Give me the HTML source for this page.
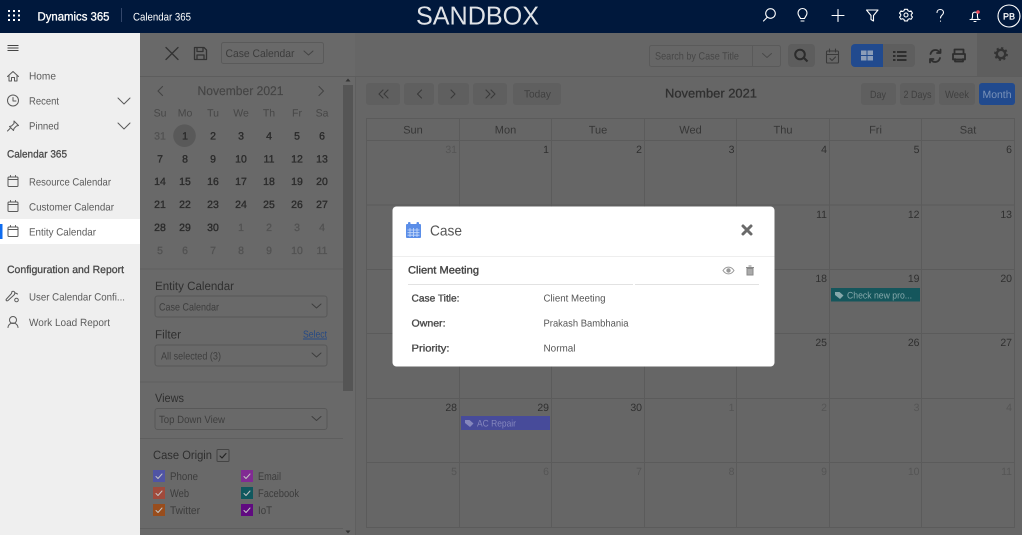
<!DOCTYPE html>
<html><head><meta charset="utf-8"><style>
html,body{margin:0;padding:0;width:1022px;height:535px;overflow:hidden;background:#666}
svg{display:block;font-family:"Liberation Sans",sans-serif}
.c text{text-anchor:middle}
.r text{text-anchor:end}
.ic{fill:none;stroke-linecap:round;stroke-linejoin:round}
</style></head><body>
<svg width="1022" height="535" viewBox="0 0 1022 535" xmlns="http://www.w3.org/2000/svg" text-rendering="geometricPrecision">
<rect width="1022" height="535" fill="#666"/>
<!-- left panel -->
<rect x="140" y="33" width="215" height="502" fill="#696969"/>
<rect x="977" y="33" width="45" height="43" fill="#5e5e5e"/>
<rect x="140" y="76" width="882" height="1" fill="#5d5d5d"/>
<rect x="355" y="77" width="1" height="458" fill="#5f5f5f"/>
<!-- header -->
<rect width="1022" height="33" fill="#00183c"/>
<g fill="#fff">
<rect x="8" y="10" width="2" height="2"/><rect x="13" y="10" width="2" height="2"/><rect x="18" y="10" width="2" height="2"/>
<rect x="8" y="14.500" width="2" height="2"/><rect x="13" y="14.500" width="2" height="2"/><rect x="18" y="14.500" width="2" height="2"/>
<rect x="8" y="19" width="2" height="2"/><rect x="13" y="19" width="2" height="2"/><rect x="18" y="19" width="2" height="2"/>
<text x="37.500" y="20.500" font-size="12" stroke="#fff" stroke-width=".3" textLength="72" lengthAdjust="spacingAndGlyphs">Dynamics 365</text>
<text x="133" y="20.500" font-size="11" textLength="58" lengthAdjust="spacingAndGlyphs">Calendar 365</text>
<text x="416" y="24.500" font-size="26" fill-opacity=".88" textLength="123" lengthAdjust="spacingAndGlyphs">SANDBOX</text>
</g>
<rect x="121" y="8" width="1" height="14" fill="#33466a"/>
<g class="ic" stroke="#fff" stroke-width="1.100">
<circle cx="770.500" cy="13.500" r="4.800"/><path d="M767 17.500L763.500 21"/>
<path d="M800.500 18.500c-.3-1.500-2.500-2.500-2.500-5.500a4.500 4.500 0 0 1 9 0c0 3-2.200 4-2.500 5.500zM801 21h3"/>
<path d="M838 9.500v12M832 15.500h12"/>
<path d="M866.500 10h11.500l-4.500 5.500v5.500l-2.500-1.500v-4z"/>
<circle cx="906" cy="15" r="2"/>
<path d="M904.500 9.300h3l.5 1.500 1.500.7 1.500-.6 1.500 2.300-1.200 1.100v1.600l1.200 1.100-1.500 2.300-1.500-.6-1.500.7-.5 1.500h-3l-.5-1.500-1.500-.7-1.500.6-1.500-2.300 1.200-1.100v-1.600l-1.200-1.100 1.500-2.300 1.500.6 1.500-.7z"/>
<path d="M937 12.500c0-4 6.500-4 6.500 0 0 2.500-3 2.500-3 5.500M940.500 21v.2"/>
<path d="M970 19.500h10M971.500 19.500c1.500-1.500 1-3.500 1-5.500a2.600 2.600 0 0 1 5 0c0 2-.5 4 1 5.500M974 21.500h2"/>
<circle cx="1009" cy="16" r="11"/>
</g>
<circle cx="978" cy="12" r="1.800" fill="#f0485a"/>
<text x="1009" y="19.500" text-anchor="middle" font-size="9" fill="#fff" stroke="#fff" stroke-width=".25">PB</text>
<!-- sidebar -->
<rect x="0" y="33" width="140" height="502" fill="#efefef"/>
<rect x="0" y="219" width="140" height="25" fill="#fff"/>
<rect x="0" y="224" width="2.500" height="15" fill="#0f6cf0"/>
<path d="M7.500 45.500h11M7.500 48h11M7.500 50.500h11" stroke="#444" stroke-width="1"/>
<g font-size="10.500" fill="#5c5c5c">
<text x="29" y="79.500" textLength="27" lengthAdjust="spacingAndGlyphs">Home</text>
<text x="29" y="104.500" textLength="30" lengthAdjust="spacingAndGlyphs">Recent</text>
<text x="29" y="129.500" textLength="30" lengthAdjust="spacingAndGlyphs">Pinned</text>
<text x="29" y="185.500" textLength="82" lengthAdjust="spacingAndGlyphs">Resource Calendar</text>
<text x="29" y="210.500" textLength="85" lengthAdjust="spacingAndGlyphs">Customer Calendar</text>
<text x="29" y="235.500" textLength="67" lengthAdjust="spacingAndGlyphs">Entity Calendar</text>
<text x="29" y="300.500" textLength="96" lengthAdjust="spacingAndGlyphs">User Calendar Confi...</text>
<text x="29" y="326" textLength="81" lengthAdjust="spacingAndGlyphs">Work Load Report</text>
</g>
<g font-size="10.500" fill="#4a4a4a" stroke="#4a4a4a" stroke-width=".3">
<text x="7" y="157.500" textLength="60" lengthAdjust="spacingAndGlyphs">Calendar 365</text>
<text x="7" y="273" textLength="117" lengthAdjust="spacingAndGlyphs">Configuration and Report</text>
</g>
<g class="ic" stroke="#5a5a5a" stroke-width="1">
<path d="M7.500 76.500l5.500-5 5.500 5M9 75.500v5.500h2.500v-3.500h3v3.500H17v-5.500"/>
<circle cx="13" cy="100.500" r="5.500"/><path d="M13 97.500v3.500h3"/>
<path d="M118 98l6 6 6-6M118 123l6 6 6-6"/>
<path d="M14 121l4.500 4.500-2 .5-2.500 2.500-.5 2-4-4 2-.5 2.500-2.500zM10 128.500l-2.500 2.500"/>
<rect x="8" y="177" width="10" height="9.500" rx="1"/><path d="M8 179.500h10M10.500 175.500v1.500M15.500 175.500v1.500"/>
<rect x="8" y="202" width="10" height="9.500" rx="1"/><path d="M8 204.500h10M10.500 200.500v1.500M15.500 200.500v1.500"/>
<rect x="8" y="227" width="10" height="9.500" rx="1"/><path d="M8 229.500h10M10.500 225.500v1.500M15.500 225.500v1.500"/>
<path d="M12 291.500c3-1 3.500 2 2 3.500l-6 5.500c-1.500 1-2.500-.5-1.500-1.500l5-5.500z"/><circle cx="16.500" cy="300" r="1.800"/><path d="M15.500 293l2 1"/>
<circle cx="13" cy="320" r="3.500"/><path d="M8 327.500c.5-6 9.500-6 10 0"/>
</g>
<!-- toolbar -->
<g class="ic" stroke="#333" stroke-width="1.300">
<path d="M166 47.500l12 12M178 47.500l-12 12"/>
<path d="M194.500 47.500h9.500l2.500 2.500v9.500h-12zM197 47.500v4h6v-4M197 59.500v-4.500h7v4.500"/>
</g>
<rect x="221.500" y="42.500" width="102" height="21" rx="2" fill="none" stroke="#5a5a5a"/>
<text x="225.500" y="57" font-size="11" fill="#3c3c3c" textLength="69" lengthAdjust="spacingAndGlyphs">Case Calendar</text>
<path d="M304 51l4.500 4 4.500-4" class="ic" stroke="#444"/>
<rect x="649.500" y="45.500" width="131" height="21" rx="2" fill="none" stroke="#5a5a5a"/>
<path d="M752.500 45.500v21" stroke="#5a5a5a"/>
<text x="655" y="59.500" font-size="10.500" fill="#474747" textLength="84" lengthAdjust="spacingAndGlyphs">Search by Case Title</text>
<path d="M762.500 53.500l4.500 4 4.500-4" class="ic" stroke="#4a4a4a"/>
<rect x="788" y="44" width="27" height="23" rx="4" fill="#5d5d5d"/>
<circle cx="800" cy="54.500" r="4.800" fill="none" stroke="#2c2c2c" stroke-width="2"/><path d="M804 58l3.500 3.500" stroke="#2c2c2c" stroke-width="2.200"/>
<g class="ic" stroke="#3a3a3a" stroke-width="1.100">
<rect x="826.500" y="51" width="12" height="12" rx="1"/><path d="M826.500 54.500h12M829.500 49v3M835.500 49v3M830 58.500l2 2 3.500-3.500"/>
</g>
<rect x="851" y="44" width="32" height="23" rx="4" fill="#214a8e"/>
<rect x="879" y="44" width="4" height="23" fill="#214a8e"/>
<rect x="883" y="44" width="32" height="23" rx="4" fill="#5e5e5e"/>
<rect x="883" y="44" width="4" height="23" fill="#5e5e5e"/>
<g fill="#8b9db8"><rect x="861" y="50.500" width="5.500" height="4.500"/><rect x="867.500" y="50.500" width="5.500" height="4.500"/><rect x="861" y="56" width="5.500" height="4.500"/><rect x="867.500" y="56" width="5.500" height="4.500"/></g>
<g fill="#2e2e2e"><rect x="893" y="51" width="2.500" height="2"/><rect x="893" y="55" width="2.500" height="2"/><rect x="893" y="59" width="2.500" height="2"/><rect x="897" y="51" width="9.500" height="2"/><rect x="897" y="55" width="9.500" height="2"/><rect x="897" y="59" width="9.500" height="2"/></g>
<g class="ic" stroke="#2e2e2e" stroke-width="1.800">
<path d="M930.500 54c1.500-5 7-5 9-1.500M940 58c-1.500 5-7 5-9 1.500"/><path d="M940.500 49.500v3.500h-3.500M930 62.500v-3.500h3.500"/>
<path d="M954.500 54v-4.500h9V54M953 54h12v5.500h-12zM955 59v2.500h8V59"/>
</g>
<g fill="#333"><circle cx="1001" cy="54" r="4.200" fill="none" stroke="#333" stroke-width="2.400"/><circle cx="1001" cy="54" r="6" fill="none" stroke="#333" stroke-width="1.800" stroke-dasharray="2.200 2.500"/></g>
<!-- mini calendar -->
<g class="ic" stroke="#444" stroke-width="1.100"><path d="M162.500 86.500l-4.500 4.500 4.500 4.500M319 86.500l4.500 4.500-4.500 4.500"/></g>
<text x="197.500" y="95" font-size="12.500" fill="#444" stroke="#444" stroke-width=".15" textLength="86" lengthAdjust="spacingAndGlyphs">November 2021</text>
<g class="c" font-size="10.500" fill="#474747">
<text x="160" y="116.500">Su</text><text x="185" y="116.500">Mo</text><text x="213" y="116.500">Tu</text><text x="241" y="116.500">We</text><text x="269" y="116.500">Th</text><text x="297" y="116.500">Fr</text><text x="322" y="116.500">Sa</text>
</g>
<circle cx="184.500" cy="135.700" r="11.300" fill="#595959"/>
<g class="c" font-size="10.500" fill="#2b2b2b" stroke="#2b2b2b" stroke-width=".35">
<text x="185" y="139.500">1</text><text x="213" y="139.500">2</text><text x="241" y="139.500">3</text><text x="269" y="139.500">4</text><text x="297" y="139.500">5</text><text x="322" y="139.500">6</text>
<text x="160" y="162.500">7</text><text x="185" y="162.500">8</text><text x="213" y="162.500">9</text><text x="241" y="162.500">10</text><text x="269" y="162.500">11</text><text x="297" y="162.500">12</text><text x="322" y="162.500">13</text>
<text x="160" y="185">14</text><text x="185" y="185">15</text><text x="213" y="185">16</text><text x="241" y="185">17</text><text x="269" y="185">18</text><text x="297" y="185">19</text><text x="322" y="185">20</text>
<text x="160" y="208">21</text><text x="185" y="208">22</text><text x="213" y="208">23</text><text x="241" y="208">24</text><text x="269" y="208">25</text><text x="297" y="208">26</text><text x="322" y="208">27</text>
<text x="160" y="231">28</text><text x="185" y="231">29</text><text x="213" y="231">30</text>
</g>
<g class="c" font-size="10.500" fill="#525252" stroke="#525252" stroke-width=".3">
<text x="160" y="139.500">31</text>
<text x="241" y="231">1</text><text x="269" y="231">2</text><text x="297" y="231">3</text><text x="322" y="231">4</text>
<text x="160" y="254">5</text><text x="185" y="254">6</text><text x="213" y="254">7</text><text x="241" y="254">8</text><text x="269" y="254">9</text><text x="297" y="254">10</text><text x="322" y="254">11</text>
</g>
<g fill="#5e5e5e"><rect x="140" y="268.500" width="203" height="1"/><rect x="140" y="381.500" width="203" height="1"/><rect x="140" y="438" width="203" height="1"/><rect x="140" y="528" width="203" height="1"/></g>
<!-- filters -->
<g font-size="12" fill="#2f2f2f">
<text x="155" y="290" textLength="79" lengthAdjust="spacingAndGlyphs">Entity Calendar</text>
<text x="155" y="338.500" textLength="26" lengthAdjust="spacingAndGlyphs">Filter</text>
<text x="155" y="402" textLength="29" lengthAdjust="spacingAndGlyphs">Views</text>
<text x="153" y="459" textLength="59" lengthAdjust="spacingAndGlyphs">Case Origin</text>
</g>
<text x="303" y="337.500" font-size="10" fill="#264a85" text-decoration="underline" textLength="24" lengthAdjust="spacingAndGlyphs">Select</text>
<g fill="none" stroke="#585858"><rect x="155" y="296" width="172" height="21" rx="2.500"/><rect x="155" y="345" width="172" height="21" rx="2.500"/><rect x="155" y="408.500" width="172" height="21" rx="2.500"/></g>
<g font-size="10.500" fill="#3e3e3e">
<text x="159" y="310.500" textLength="60" lengthAdjust="spacingAndGlyphs">Case Calendar</text>
<text x="161" y="359.500" textLength="60" lengthAdjust="spacingAndGlyphs">All selected (3)</text>
<text x="159" y="423" textLength="66" lengthAdjust="spacingAndGlyphs">Top Down View</text>
</g>
<g class="ic" stroke="#3e3e3e"><path d="M312 304l4.500 4 4.500-4M312 353l4.500 4 4.500-4M312 416.500l4.500 4 4.500-4"/></g>
<rect x="217" y="449.500" width="12" height="12" rx="1" fill="none" stroke="#444"/>
<path d="M220 456l2 2 4-4.500" class="ic" stroke="#222" stroke-width="1.100"/>
<rect x="153" y="470" width="12" height="12" fill="#5054a4"/><rect x="153" y="487" width="12" height="12" fill="#a04a3c"/><rect x="153" y="504" width="12" height="12" fill="#984d1d"/>
<rect x="241" y="470" width="12" height="12" fill="#812b93"/><rect x="241" y="487" width="12" height="12" fill="#10585e"/><rect x="241" y="504" width="12" height="12" fill="#600a80"/>
<g class="ic" stroke="#c4c4c4" stroke-width="1"><path d="M156 476.500l2 2 4-4.500M156 493.500l2 2 4-4.500M156 510.500l2 2 4-4.500M244 476.500l2 2 4-4.500M244 493.500l2 2 4-4.500M244 510.500l2 2 4-4.500"/></g>
<g font-size="11" fill="#3c3c3c">
<text x="170" y="480" textLength="28" lengthAdjust="spacingAndGlyphs">Phone</text>
<text x="170" y="497" textLength="19" lengthAdjust="spacingAndGlyphs">Web</text>
<text x="170" y="514" textLength="30" lengthAdjust="spacingAndGlyphs">Twitter</text>
<text x="258" y="480" textLength="23" lengthAdjust="spacingAndGlyphs">Email</text>
<text x="258" y="497" textLength="41" lengthAdjust="spacingAndGlyphs">Facebook</text>
<text x="258" y="514" textLength="14" lengthAdjust="spacingAndGlyphs">IoT</text>
</g>
<!-- scrollbar -->
<rect x="343" y="85" width="10" height="306" fill="#555"/>
<path d="M345.500 81.500l2.500-3 2.500 3zM345.500 530.500l2.500 3 2.500-3z" fill="#333"/>
<!-- nav buttons -->
<g fill="#5f5f5f">
<rect x="366" y="83" width="34" height="22" rx="3"/><rect x="404" y="83" width="30" height="22" rx="3"/><rect x="438" y="83" width="31" height="22" rx="3"/><rect x="473" y="83" width="34" height="22" rx="3"/><rect x="513" y="83" width="48" height="22" rx="3"/>
<rect x="861" y="83" width="35" height="22" rx="3"/><rect x="900" y="83" width="35" height="22" rx="3"/><rect x="939" y="83" width="36" height="22" rx="3"/>
</g>
<rect x="979" y="83" width="36" height="22" rx="3" fill="#214a8e"/>
<g class="ic" stroke="#3a3a3a" stroke-width="1.100">
<path d="M383 90l-4 4 4 4M388 90l-4 4 4 4M421.500 90l-4 4 4 4M451 90l4 4-4 4M486 90l4 4-4 4M491 90l4 4-4 4"/>
</g>
<g font-size="10.500" fill="#404040">
<text x="524" y="97.500" textLength="27" lengthAdjust="spacingAndGlyphs">Today</text>
<text x="870" y="98" textLength="16" lengthAdjust="spacingAndGlyphs">Day</text>
<text x="903.500" y="98" textLength="28" lengthAdjust="spacingAndGlyphs">2 Days</text>
<text x="945" y="98" textLength="24" lengthAdjust="spacingAndGlyphs">Week</text>
</g>
<text x="982.500" y="98" font-size="10.500" fill="#7a92b8" textLength="29" lengthAdjust="spacingAndGlyphs">Month</text>
<text x="665" y="97.500" font-size="12.500" fill="#303030" stroke="#303030" stroke-width=".3" textLength="92" lengthAdjust="spacingAndGlyphs">November 2021</text>
<!-- grid -->
<g stroke="#5b5b5b" fill="none">
<rect x="366.500" y="118.500" width="648" height="409"/>
<path d="M459.500 118.500v409M551.500 118.500v409M644.500 118.500v409M736.500 118.500v409M829.500 118.500v409M921.500 118.500v409"/>
<path d="M366.500 140.500h648M366.500 205h648M366.500 269.500h648M366.500 333.500h648M366.500 398.500h648M366.500 462.500h648"/>
</g>
<g class="c" font-size="11" fill="#363636">
<text x="413" y="133.500">Sun</text><text x="505.500" y="133.500">Mon</text><text x="598" y="133.500">Tue</text><text x="690.500" y="133.500">Wed</text><text x="783" y="133.500">Thu</text><text x="875.500" y="133.500">Fri</text><text x="968" y="133.500">Sat</text>
</g>
<g class="r" font-size="10.500" fill="#2f2f2f">
<text x="549" y="153">1</text><text x="642" y="153">2</text><text x="734.500" y="153">3</text><text x="827" y="153">4</text><text x="919.500" y="153">5</text><text x="1012" y="153">6</text>
<text x="827" y="218">11</text><text x="919.500" y="218">12</text><text x="1012" y="218">13</text>
<text x="827" y="282">18</text><text x="919.500" y="282">19</text><text x="1012" y="282">20</text>
<text x="827" y="346">25</text><text x="919.500" y="346">26</text><text x="1012" y="346">27</text>
<text x="457" y="411">28</text><text x="549" y="411">29</text><text x="642" y="411">30</text>
</g>
<g class="r" font-size="10.500" fill="#555">
<text x="457" y="153">31</text>
<text x="734.500" y="411">1</text><text x="827" y="411">2</text><text x="919.500" y="411">3</text><text x="1012" y="411">4</text>
<text x="457" y="475">5</text><text x="549" y="475">6</text><text x="642" y="475">7</text><text x="734.500" y="475">8</text><text x="827" y="475">9</text><text x="919.500" y="475">10</text><text x="1012" y="475">11</text>
</g>
<!-- events -->
<rect x="831" y="288" width="89" height="13.500" fill="#15565c"/>
<path d="M835 292h4.500l4 3.500-3.500 3.500-5-4z" fill="#86a8ab"/>
<text x="847" y="298.500" font-size="9.500" fill="#86a8ab" textLength="65" lengthAdjust="spacingAndGlyphs">Check new pro...</text>
<rect x="461" y="416" width="89" height="14" fill="#474b9a"/>
<path d="M465 420h4.500l4 3.500-3.500 3.500-5-4z" fill="#8587bd"/>
<text x="477" y="426.500" font-size="9.500" fill="#8587bd" textLength="39" lengthAdjust="spacingAndGlyphs">AC Repair</text>
<!-- dialog -->
<rect x="392.500" y="206.500" width="382" height="160" rx="4" fill="#fff"/>
<rect x="392.500" y="256" width="382" height="1" fill="#eeeeee"/>
<rect x="408" y="284" width="225" height="1" fill="#e2e2e2"/><rect x="635" y="284" width="124" height="1" fill="#e2e2e2"/>
<rect x="406" y="224" width="15" height="14" rx="1" fill="#5b8ee8"/>
<rect x="408" y="222" width="2.500" height="4" rx="1" fill="#5b8ee8"/><rect x="416.500" y="222" width="2.500" height="4" rx="1" fill="#5b8ee8"/>
<path d="M407.500 230h12M407.500 232.700h12M407.500 235.200h12M410 228v9M413.500 228v9M417 228v9" stroke="#c9dcfa" stroke-width=".8"/>
<text x="430" y="235.500" font-size="14.500" fill="#555" textLength="32" lengthAdjust="spacingAndGlyphs">Case</text>
<path d="M743 226l8 8M751 226l-8 8" stroke="#6a6a6a" stroke-width="3" stroke-linecap="round"/>
<text x="408" y="273.500" font-size="10.500" fill="#444" stroke="#444" stroke-width=".35" textLength="71" lengthAdjust="spacingAndGlyphs">Client Meeting</text>
<path d="M723 270.500c3-4.500 8-4.500 11 0-3 4.500-8 4.500-11 0z" fill="none" stroke="#999" stroke-width="1"/><circle cx="728.500" cy="270.500" r="2.200" fill="#999"/>
<path d="M746 267.500h8M747 268.500h6v6.500h-6zM748.500 266h3" fill="#aaa" stroke="#8a8a8a" stroke-width="1"/>
<g font-size="10" fill="#4a4a4a" stroke="#4a4a4a" stroke-width=".35">
<text x="411.500" y="301.500" textLength="48" lengthAdjust="spacingAndGlyphs">Case Title:</text>
<text x="411.500" y="326.500" textLength="34" lengthAdjust="spacingAndGlyphs">Owner:</text>
<text x="411.500" y="351.500" textLength="38" lengthAdjust="spacingAndGlyphs">Priority:</text>
</g>
<g font-size="10" fill="#555">
<text x="543.500" y="301.500" textLength="62" lengthAdjust="spacingAndGlyphs">Client Meeting</text>
<text x="543.500" y="326.500" textLength="85" lengthAdjust="spacingAndGlyphs">Prakash Bambhania</text>
<text x="543.500" y="351.500" textLength="32" lengthAdjust="spacingAndGlyphs">Normal</text>
</g>
</svg>
</body></html>
